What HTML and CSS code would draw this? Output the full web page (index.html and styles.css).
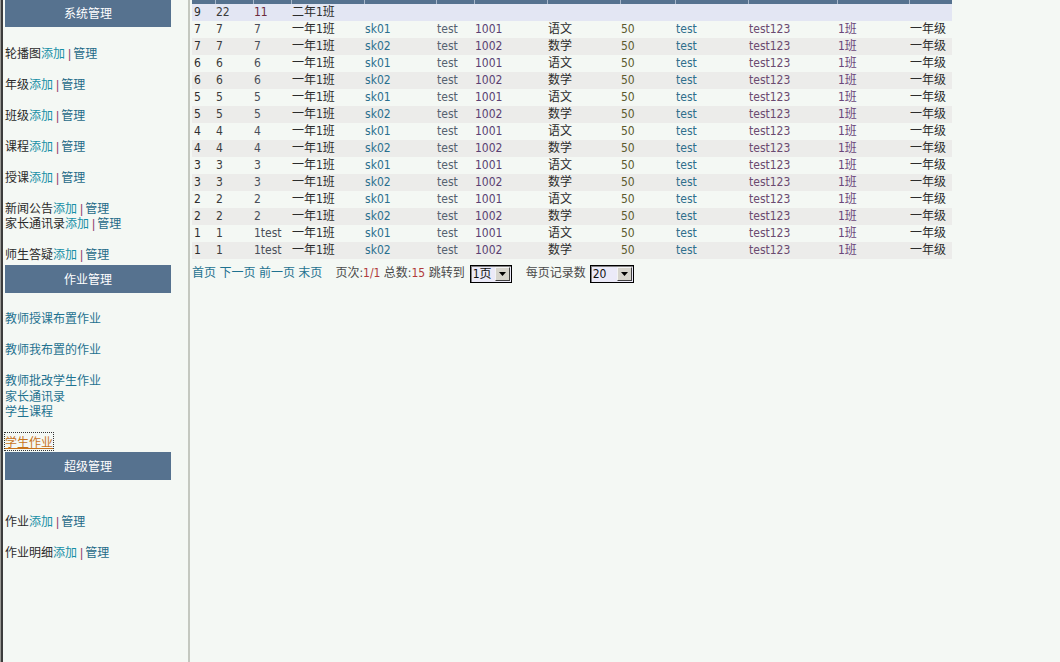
FILE: index.html
```html
<!DOCTYPE html>
<html lang="zh-CN">
<head>
<meta charset="utf-8">
<title>管理</title>
<link rel="stylesheet" href="styles.css">
</head>
<body>
<div class="frames">
  <aside class="side">
    <div class="menu-head">系统管理</div>
    <div class="menu-list first-list">
      <div class="blank"></div>
      <div class="ln">轮播图<a class="add">添加</a><span class="bar">|</span><a class="mg">管理</a></div>
      <div class="blank"></div>
      <div class="ln">年级<a class="add">添加</a><span class="bar">|</span><a class="mg">管理</a></div>
      <div class="blank"></div>
      <div class="ln">班级<a class="add">添加</a><span class="bar">|</span><a class="mg">管理</a></div>
      <div class="blank"></div>
      <div class="ln">课程<a class="add">添加</a><span class="bar">|</span><a class="mg">管理</a></div>
      <div class="blank"></div>
      <div class="ln">授课<a class="add">添加</a><span class="bar">|</span><a class="mg">管理</a></div>
      <div class="blank"></div>
      <div class="ln">新闻公告<a class="add">添加</a><span class="bar">|</span><a class="mg">管理</a></div>
      <div class="ln">家长通讯录<a class="add">添加</a><span class="bar">|</span><a class="mg">管理</a></div>
      <div class="blank"></div>
      <div class="ln">师生答疑<a class="add">添加</a><span class="bar">|</span><a class="mg">管理</a></div>
    </div>
    <div class="menu-head tall">作业管理</div>
    <div class="menu-list">
      <div class="blank"></div>
      <div class="ln"><a class="lk">教师授课布置作业</a></div>
      <div class="blank"></div>
      <div class="ln"><a class="lk">教师我布置的作业</a></div>
      <div class="blank"></div>
      <div class="ln"><a class="lk">教师批改学生作业</a></div>
      <div class="ln"><a class="lk">家长通讯录</a></div>
      <div class="ln"><a class="lk">学生课程</a></div>
      <div class="blank"></div>
      <div class="ln"><a class="lk focus">学生作业</a></div>
    </div>
    <div class="menu-head tall">超级管理</div>
    <div class="menu-list">
      <div class="blank"></div>
      <div class="blank"></div>
      <div class="ln">作业<a class="add">添加</a><span class="bar">|</span><a class="mg">管理</a></div>
      <div class="blank"></div>
      <div class="ln">作业明细<a class="add">添加</a><span class="bar">|</span><a class="mg">管理</a></div>
    </div>
  </aside>
  <main class="main">
    <table class="grid">
      <colgroup>
        <col style="width:23px"><col style="width:38px"><col style="width:38px"><col style="width:73px">
        <col style="width:72px"><col style="width:38px"><col style="width:73px"><col style="width:73px">
        <col style="width:55px"><col style="width:73px"><col style="width:89px"><col style="width:72px">
        <col style="width:43px">
      </colgroup>
      <thead>
        <tr><th></th><th></th><th></th><th></th><th></th><th></th><th></th><th></th><th></th><th></th><th></th><th></th><th></th></tr>
      </thead>
      <tbody>
        <tr class="first"><td class="c1">9</td><td class="c2">22</td><td class="c3 red">11</td><td class="c4">二年1班</td><td></td><td></td><td></td><td></td><td></td><td></td><td></td><td></td><td></td></tr>
        <tr class="odd"><td class="c1">7</td><td class="c2">7</td><td class="c3">7</td><td class="c4">一年1班</td><td class="c5">sk01</td><td class="c6">test</td><td class="c7">1001</td><td class="c8">语文</td><td class="c9">50</td><td class="c10">test</td><td class="c11">test123</td><td class="c12">1班</td><td class="c13">一年级</td></tr>
        <tr class="even"><td class="c1">7</td><td class="c2">7</td><td class="c3">7</td><td class="c4">一年1班</td><td class="c5">sk02</td><td class="c6">test</td><td class="c7">1002</td><td class="c8">数学</td><td class="c9">50</td><td class="c10">test</td><td class="c11">test123</td><td class="c12">1班</td><td class="c13">一年级</td></tr>
        <tr class="odd"><td class="c1">6</td><td class="c2">6</td><td class="c3">6</td><td class="c4">一年1班</td><td class="c5">sk01</td><td class="c6">test</td><td class="c7">1001</td><td class="c8">语文</td><td class="c9">50</td><td class="c10">test</td><td class="c11">test123</td><td class="c12">1班</td><td class="c13">一年级</td></tr>
        <tr class="even"><td class="c1">6</td><td class="c2">6</td><td class="c3">6</td><td class="c4">一年1班</td><td class="c5">sk02</td><td class="c6">test</td><td class="c7">1002</td><td class="c8">数学</td><td class="c9">50</td><td class="c10">test</td><td class="c11">test123</td><td class="c12">1班</td><td class="c13">一年级</td></tr>
        <tr class="odd"><td class="c1">5</td><td class="c2">5</td><td class="c3">5</td><td class="c4">一年1班</td><td class="c5">sk01</td><td class="c6">test</td><td class="c7">1001</td><td class="c8">语文</td><td class="c9">50</td><td class="c10">test</td><td class="c11">test123</td><td class="c12">1班</td><td class="c13">一年级</td></tr>
        <tr class="even"><td class="c1">5</td><td class="c2">5</td><td class="c3">5</td><td class="c4">一年1班</td><td class="c5">sk02</td><td class="c6">test</td><td class="c7">1002</td><td class="c8">数学</td><td class="c9">50</td><td class="c10">test</td><td class="c11">test123</td><td class="c12">1班</td><td class="c13">一年级</td></tr>
        <tr class="odd"><td class="c1">4</td><td class="c2">4</td><td class="c3">4</td><td class="c4">一年1班</td><td class="c5">sk01</td><td class="c6">test</td><td class="c7">1001</td><td class="c8">语文</td><td class="c9">50</td><td class="c10">test</td><td class="c11">test123</td><td class="c12">1班</td><td class="c13">一年级</td></tr>
        <tr class="even"><td class="c1">4</td><td class="c2">4</td><td class="c3">4</td><td class="c4">一年1班</td><td class="c5">sk02</td><td class="c6">test</td><td class="c7">1002</td><td class="c8">数学</td><td class="c9">50</td><td class="c10">test</td><td class="c11">test123</td><td class="c12">1班</td><td class="c13">一年级</td></tr>
        <tr class="odd"><td class="c1">3</td><td class="c2">3</td><td class="c3">3</td><td class="c4">一年1班</td><td class="c5">sk01</td><td class="c6">test</td><td class="c7">1001</td><td class="c8">语文</td><td class="c9">50</td><td class="c10">test</td><td class="c11">test123</td><td class="c12">1班</td><td class="c13">一年级</td></tr>
        <tr class="even"><td class="c1">3</td><td class="c2">3</td><td class="c3">3</td><td class="c4">一年1班</td><td class="c5">sk02</td><td class="c6">test</td><td class="c7">1002</td><td class="c8">数学</td><td class="c9">50</td><td class="c10">test</td><td class="c11">test123</td><td class="c12">1班</td><td class="c13">一年级</td></tr>
        <tr class="odd"><td class="c1">2</td><td class="c2">2</td><td class="c3">2</td><td class="c4">一年1班</td><td class="c5">sk01</td><td class="c6">test</td><td class="c7">1001</td><td class="c8">语文</td><td class="c9">50</td><td class="c10">test</td><td class="c11">test123</td><td class="c12">1班</td><td class="c13">一年级</td></tr>
        <tr class="even"><td class="c1">2</td><td class="c2">2</td><td class="c3">2</td><td class="c4">一年1班</td><td class="c5">sk02</td><td class="c6">test</td><td class="c7">1002</td><td class="c8">数学</td><td class="c9">50</td><td class="c10">test</td><td class="c11">test123</td><td class="c12">1班</td><td class="c13">一年级</td></tr>
        <tr class="odd"><td class="c1">1</td><td class="c2">1</td><td class="c3">1test</td><td class="c4">一年1班</td><td class="c5">sk01</td><td class="c6">test</td><td class="c7">1001</td><td class="c8">语文</td><td class="c9">50</td><td class="c10">test</td><td class="c11">test123</td><td class="c12">1班</td><td class="c13">一年级</td></tr>
        <tr class="even"><td class="c1">1</td><td class="c2">1</td><td class="c3">1test</td><td class="c4">一年1班</td><td class="c5">sk02</td><td class="c6">test</td><td class="c7">1002</td><td class="c8">数学</td><td class="c9">50</td><td class="c10">test</td><td class="c11">test123</td><td class="c12">1班</td><td class="c13">一年级</td></tr>
      </tbody>
    </table>
    <div class="pager"><a class="plink">首页</a> <a class="plink">下一页</a> <a class="plink">前一页</a> <a class="plink">末页</a><span class="gap"></span>页次:<span class="num">1/1</span> 总数:<span class="num">15</span> 跳转到<span class="sel w1"><span class="val">1页</span><span class="btn"><svg width="7" height="4" viewBox="0 0 7 4"><path d="M0 0h7L3.5 4z" fill="#000"/></svg></span></span><span class="gap2"></span>每页记录数<span class="sel w2"><span class="val">20</span><span class="btn"><svg width="7" height="4" viewBox="0 0 7 4"><path d="M0 0h7L3.5 4z" fill="#000"/></svg></span></span></div>
  </main>
</div>
</body>
</html>
```
FILE: styles.css
```css
html, body {
  margin: 0;
  padding: 0;
  height: 100%;
  background: #f4f8f4;
  overflow: hidden;
}
body {
  font-family: "DejaVu Sans Condensed", "DejaVu Sans", "Noto Sans CJK SC", sans-serif;
  font-size: 12px;
  color: #333;
}
a { cursor: pointer; }
.frames {
  display: flex;
  height: 662px;
}
.side {
  width: 183px;
  flex: none;
  border-left: 1px solid #9a9a96;
  box-shadow: inset 2px 0 0 #3c3c3c;
  border-right: 2px solid #c4c8c0;
  padding-left: 4px;
  background: #f4f8f4;
}
.menu-head {
  width: 166px;
  height: 27px;
  line-height: 26px;
  background: #56728f;
  color: #fff;
  text-align: center;
  font-family: "Noto Sans CJK SC", sans-serif;
  font-size: 12px;
}
.menu-head.tall {
  height: 28px;
  line-height: 27px;
}
.menu-list {
  padding: 2px 0 2px 0;
  font-family: "Noto Sans CJK SC", sans-serif;
}
.menu-list.first-list {
  padding-bottom: 3px;
}
.ln, .blank {
  height: 15.5px;
  line-height: 15.5px;
  white-space: nowrap;
  color: #2a2a2a;
}
.add { color: #178fa6; }
.mg { color: #1f6a88; }
.bar {
  color: #8c3c6c;
  font-family: "Liberation Sans", sans-serif;
  margin: 0 2px 0 3px;
}
.lk { color: #1f7290; }
.focus {
  color: #c8741c;
  text-decoration: underline;
  outline: 1px dotted #333;
}
.main {
  flex: 1;
  padding-left: 2px;
}
.grid {
  border-collapse: collapse;
  table-layout: fixed;
  width: 760px;
}
.grid th {
  height: 4px;
  padding: 0;
  background: #56728f;
  border-left: 1px solid #a9b8cb;
}
.grid th:first-child { border-left: none; }
.grid td {
  height: 17px;
  padding: 0 0 0 1px;
  white-space: nowrap;
  overflow: hidden;
  line-height: 17px;
}
.grid td.c1 { padding-left: 2px; }
.grid tr.first td { background: #e3e6f3; }
.grid tr.odd td { background: #f4f8f4; }
.grid tr.even td { background: #ececea; }
.c1 { color: #2e2e2e; }
.c2 { color: #3c3c3c; }
.c3 { color: #4a4f58; }
.c3.red { color: #6d2a3c; }
.c4 { color: #2c2c2c; }
.c5 { color: #2a6f8e; }
.c6 { color: #556270; }
.c7 { color: #5a3f72; }
.c8 { color: #2c2c2c; }
.c9 { color: #5c5a2e; }
.c10 { color: #2f6f8c; }
.c11 { color: #6a4a70; }
.c12 { color: #6a467a; }
.c13 { color: #2c2c2c; }
.pager {
  height: 22px;
  line-height: 22px;
  margin-top: 3px;
  white-space: nowrap;
  color: #4a4a4a;
}
.plink { color: #1f7290; }
.gap { display: inline-block; width: 13px; }
.gap2 { display: inline-block; width: 14px; }
.num { color: #b03a3a; }
.sel {
  display: inline-flex;
  align-items: center;
  vertical-align: middle;
  height: 18px;
  box-sizing: border-box;
  border: 1px solid #000;
  box-shadow: inset 1px 1px 0 #808080;
  background: #ebeaf8;
  margin-left: 4px;
  line-height: 16px;
}
.sel.w1 { width: 42px; margin-left: 5px; }
.sel.w2 { width: 44px; }
.sel .val {
  flex: 1;
  padding-left: 2px;
  color: #111;
}
.sel .btn {
  width: 15px;
  height: 14px;
  margin-right: 1px;
  background: #d6d4cc;
  border: 1px solid;
  border-color: #f4f4f4 #404040 #404040 #f4f4f4;
  box-sizing: border-box;
  display: flex;
  align-items: center;
  justify-content: center;
}
```
